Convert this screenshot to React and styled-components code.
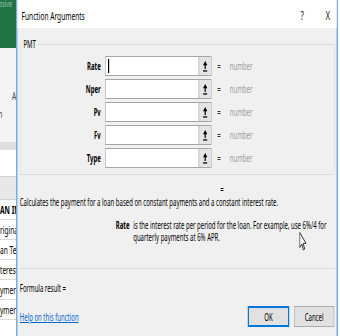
import { Fragment } from "react";
import styled, { createGlobalStyle } from "styled-components";

// the reference is a horizontally squeezed capture, so the page is
// laid out wide and squeezed back to 340px
const SQUEEZE = 0.6;

const GlobalStyle = createGlobalStyle`
  html, body {
    margin: 0;
    padding: 0;
    background: #ffffff;
    overflow: hidden;
  }
  body {
    font-family: "Noto Sans", "Open Sans", sans-serif;
    font-size: 10px;
    color: #000;
  }
`;

const Page = styled.div`
  display: flex;
  width: ${340 / SQUEEZE}px;
  height: 336px;
  transform: scaleX(${SQUEEZE});
  transform-origin: 0 0;
  position: relative;
`;

const Sheet = styled.div`
  width: 27px;
  flex-shrink: 0;
  display: flex;
  flex-direction: column;
  overflow: hidden;
  background: #fff;
  white-space: nowrap;
`;

const SheetBand = styled.div`
  height: ${(p) => p.h}px;
  flex-shrink: 0;
  background: ${(p) => p.bg || "#fff"};
  border-bottom: ${(p) => (p.line ? "1px solid #d4d4d4" : "none")};
  box-sizing: border-box;
  overflow: hidden;
`;

const GreenText = styled.div`
  color: #9cc7a9;
  font-size: 9px;
  line-height: 7px;
  margin-left: -6px;
`;

const RibbonLetter = styled.div`
  font-size: 11px;
  line-height: 12px;
  color: #444;
  margin-left: ${(p) => p.indent}px;
  margin-top: ${(p) => p.top}px;
`;

const Cell = styled.div`
  height: 20px;
  line-height: 20px;
  flex-shrink: 0;
  font-size: 11px;
  font-weight: ${(p) => (p.bold ? 700 : 400)};
  border-bottom: 1px solid #dadada;
  box-sizing: border-box;
`;

const Dialog = styled.div`
  width: 536px;
  flex-shrink: 0;
  display: flex;
  flex-direction: column;
  background: #f0f0f0;
  border-left: 2px solid #5b9be0;
  border-right: 2px solid #5b9be0;
  box-sizing: border-box;
  position: relative;
`;

const TitleBar = styled.div`
  height: 28px;
  background: #fff;
  display: flex;
  align-items: center;
  padding: 2px 11px 0 7px;
  box-sizing: border-box;
`;

const Title = styled.div`
  flex: 1;
  font-size: 11px;
`;

const TitleGlyph = styled.div`
  font-size: 13px;
  color: #222;
  margin-left: ${(p) => p.gap || 0}px;
`;

const Body = styled.div`
  padding: 0 3px 0 4px;
  display: flex;
  flex-direction: column;
`;

const Group = styled.fieldset`
  margin: 10px 0 0;
  padding: 6px 0 6px;
  border: 1px solid #dcdcdc;
  min-width: 0;
`;

const Legend = styled.legend`
  margin-left: 3px;
  padding: 0 2px;
  line-height: 12px;
  font-size: 10px;
`;

const ArgGrid = styled.div`
  display: grid;
  grid-template-columns: 141px 178px 30px 1fr;
  row-gap: 3px;
  align-items: center;
`;

const ArgLabel = styled.div`
  text-align: right;
  padding-right: 7px;
  font-weight: 700;
  font-size: 10px;
`;

const InputBox = styled.div`
  height: 20px;
  display: flex;
  background: #fff;
  border: 1px solid #a6a6a6;
  box-sizing: border-box;
`;

const Field = styled.div`
  flex: 1;
  display: flex;
  align-items: center;
  padding-left: 4px;
`;

const Caret = styled.div`
  width: 2px;
  height: 14px;
  background: #000;
`;

const RefButton = styled.div`
  width: 20px;
  background: #e4e4e4;
  border-left: 1px solid #a6a6a6;
  display: flex;
  align-items: center;
  justify-content: center;
`;

const Equals = styled.div`
  padding-left: 9px;
  color: #333;
`;

const Hint = styled.div`
  color: #9a9a9a;
`;

const ResultEq = styled.div`
  margin-top: 8px;
  padding-left: 334px;
  line-height: 12px;
`;

const Text = styled.div`
  line-height: 12px;
  margin-top: ${(p) => p.top || 0}px;
`;

const ArgHelp = styled.div`
  display: grid;
  grid-template-columns: 29px 1fr;
  padding-left: 160px;
  margin-top: 11px;
  line-height: 12px;
`;

const ArgHelpName = styled.div`
  font-weight: 700;
`;

const Divider = styled.div`
  margin-top: 25px;
  border-top: 1px solid #dcdcdc;
`;

const Footer = styled.div`
  margin-top: 12px;
  display: flex;
  align-items: center;
  gap: 8px;
  padding-right: 1px;
`;

const HelpLink = styled.a`
  flex: 1;
  color: #0066cc;
  text-decoration: underline;
`;

const Button = styled.button`
  width: ${(p) => p.w}px;
  height: 21px;
  font-family: inherit;
  font-size: 10px;
  color: #000;
  background: #e1e1e1;
  border: ${(p) => (p.primary ? "2px solid #0078d7" : "1px solid #adadad")};
  padding: 0;
  box-sizing: border-box;
`;

const Pointer = styled.svg`
  position: absolute;
  left: 470px;
  top: 232px;
`;

const args = ["Rate", "Nper", "Pv", "Fv", "Type"];
const cells = [
  { text: "AN IN", bold: true },
  { text: "rigina" },
  { text: "an Te" },
  { text: "terest" },
  { text: "ymer" },
  { text: "ymer" },
];

function CollapseIcon() {
  return (
    <svg width="8" height="11" viewBox="0 0 8 11">
      <path d="M4 0 L7.6 4.2 L5 4.2 L5 8 L3 8 L3 4.2 L0.4 4.2 Z" fill="#000" />
      <rect x="0.5" y="9.3" width="7" height="1.3" fill="#000" />
    </svg>
  );
}

export default function App() {
  return (
    <>
      <GlobalStyle />
      <Page>
        <Sheet>
          <SheetBand h={48} bg="#217346">
            <GreenText>ossive</GreenText>
          </SheetBand>
          <SheetBand h={94} bg="#f4f4f4">
            <RibbonLetter indent={20} top={42}>A</RibbonLetter>
            <RibbonLetter indent={-3} top={6}>n</RibbonLetter>
          </SheetBand>
          <SheetBand h={8} bg="#dedede" />
          <SheetBand h={27} bg="#fff" line />
          <SheetBand h={23} bg="#e8e8e8" line />
          {cells.map((c, i) => (
            <Cell key={i} bold={c.bold}>
              {c.text}
            </Cell>
          ))}
        </Sheet>

        <Dialog>
          <TitleBar>
            <Title>Function Arguments</Title>
            <TitleGlyph>?</TitleGlyph>
            <TitleGlyph gap={36}>X</TitleGlyph>
          </TitleBar>

          <Body>
            <Group>
              <Legend>PMT</Legend>
              <ArgGrid>
                {args.map((name, i) => (
                  <Fragment key={name}>
                    <ArgLabel>{name}</ArgLabel>
                    <InputBox>
                      <Field>{i === 0 && <Caret />}</Field>
                      <RefButton>
                        <CollapseIcon />
                      </RefButton>
                    </InputBox>
                    <Equals>=</Equals>
                    <Hint>number</Hint>
                  </Fragment>
                ))}
              </ArgGrid>
            </Group>

            <ResultEq>=</ResultEq>
            <Text top={1}>
              Calculates the payment for a loan based on constant payments and a
              constant interest rate.
            </Text>

            <ArgHelp>
              <ArgHelpName>Rate</ArgHelpName>
              <div>
                is the interest rate per period for the loan. For example, use
                6%/4 for
                <br />
                quarterly payments at 6% APR.
              </div>
            </ArgHelp>

            <Divider />

            <Text top={13}>Formula result =</Text>

            <Footer>
              <HelpLink href="#">Help on this function</HelpLink>
              <Button primary w={69}>OK</Button>
              <Button w={67}>Cancel</Button>
            </Footer>
          </Body>

          <Pointer width="12" height="19" viewBox="0 0 12 19">
            <path
              d="M0.5 0.5 L0.5 15.5 L4 12.2 L6.6 18 L8.8 17 L6.3 11.4 L11 11.4 Z"
              fill="#fff"
              stroke="#000"
              strokeWidth="1"
            />
          </Pointer>
        </Dialog>
      </Page>
    </>
  );
}
